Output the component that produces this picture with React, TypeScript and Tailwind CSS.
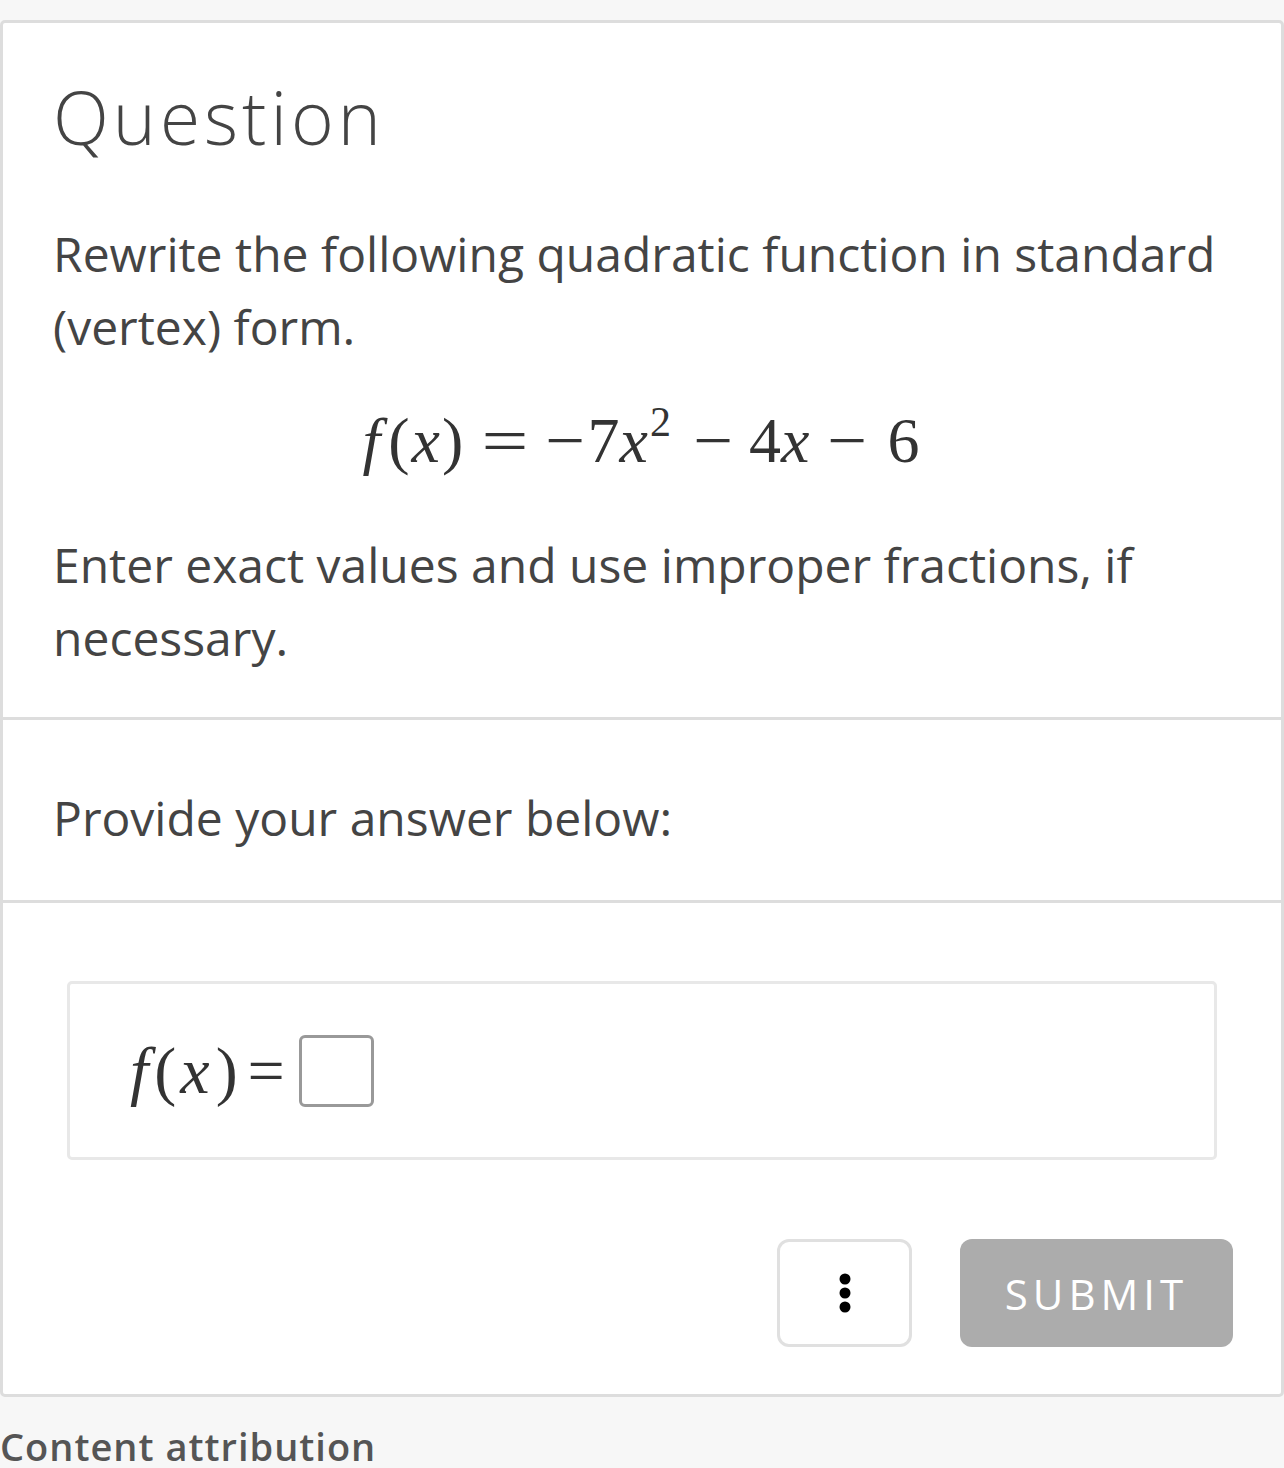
import React from 'react';

const sans = { fontFamily: '"Open Sans", "Noto Sans", sans-serif' };
const serif = { fontFamily: '"Liberation Serif", "DejaVu Serif", serif' };

function MenuButton() {
  return (
    <button
      type="button"
      className="flex h-[108px] w-[135px] items-center justify-center rounded-[12px] border-[3px] border-[#e0e0e0] bg-white"
      aria-label="More"
    >
      <svg width="12" height="40" viewBox="0 0 12 40">
        <circle cx="6" cy="6" r="5.5" fill="#000" />
        <circle cx="6" cy="20" r="5.5" fill="#000" />
        <circle cx="6" cy="34" r="5.5" fill="#000" />
      </svg>
    </button>
  );
}

export default function App() {
  return (
    <div className="min-h-[1468px] overflow-hidden bg-[#f7f7f7] pt-[20px]" style={sans}>
      <div className="rounded-[5px] border-[3px] border-[#dddddd] bg-white">
        <div className="px-[50px] pb-[43px] pt-[44px]">
          <h1 className="text-[73px] font-light leading-[100px] tracking-[4px] text-[#444444]">Question</h1>
          <p className="mt-[50px] text-[48px] leading-[73px] text-[#444444]">
            Rewrite the following quadratic function in standard (vertex) form.
          </p>
          <div
            className="mt-[38px] flex justify-center pr-[2px] text-[64px] leading-[80px] text-[#333333]"
            style={serif}
          >
            <span className="flex items-baseline">
              <i>f</i>
              <span className="ml-[8px]">(</span>
              <i className="ml-[2px]">x</i>
              <span className="ml-[2px]">)</span>
              <span className="mx-[24px] inline-block scale-x-[1.3]">=</span>
              <span className="inline-block scale-x-[1.1]">−</span>
              <span className="ml-[4px]">7</span>
              <i>x</i>
              <span className="relative top-[-26px] ml-[2px] text-[42px] leading-none">2</span>
              <span className="ml-[24px] mr-[18px] inline-block scale-x-[1.1]">−</span>
              <span>4</span>
              <i>x</i>
              <span className="ml-[20px] mr-[22px] inline-block scale-x-[1.1]">−</span>
              <span>6</span>
            </span>
          </div>
          <p className="mt-[47px] text-[48px] leading-[73px] text-[#444444]">
            Enter exact values and use improper fractions, if necessary.
          </p>
        </div>
        <div className="border-t-[3px] border-[#dddddd] px-[50px] pb-[56px] pt-[72px]">
          <p className="text-[48px] leading-[52px] text-[#444444]">Provide your answer below:</p>
        </div>
        <div className="border-t-[3px] border-[#dddddd] px-[64px] pb-[47px] pt-[78px]">
          <div className="flex h-[179px] items-center rounded-[5px] border-[3px] border-[#e8e8e8] px-[60px]">
            <div className="flex items-center text-[66px] leading-none text-[#333333]" style={serif}>
              <i>f</i>
              <span className="ml-[6px]">(</span>
              <i className="ml-[4px]">x</i>
              <span className="ml-[6px]">)</span>
              <span className="ml-[10px] mr-[14px]">=</span>
              <span className="inline-block h-[72px] w-[75px] rounded-[6px] border-[3px] border-[#999999]" />
            </div>
          </div>
          <div className="mt-[79px] flex items-center justify-end gap-[48px]">
            <MenuButton />
            <button
              type="button"
              className="mr-[-16px] h-[108px] w-[273px] rounded-[12px] bg-[#acacac] text-[42px] font-medium tracking-[5px] text-white"
            >
              SUBMIT
            </button>
          </div>
        </div>
      </div>
      <div className="mt-[27px] text-[38px] font-semibold leading-[44px] tracking-[1px] text-[#555555]">
        Content attribution
      </div>
    </div>
  );
}
